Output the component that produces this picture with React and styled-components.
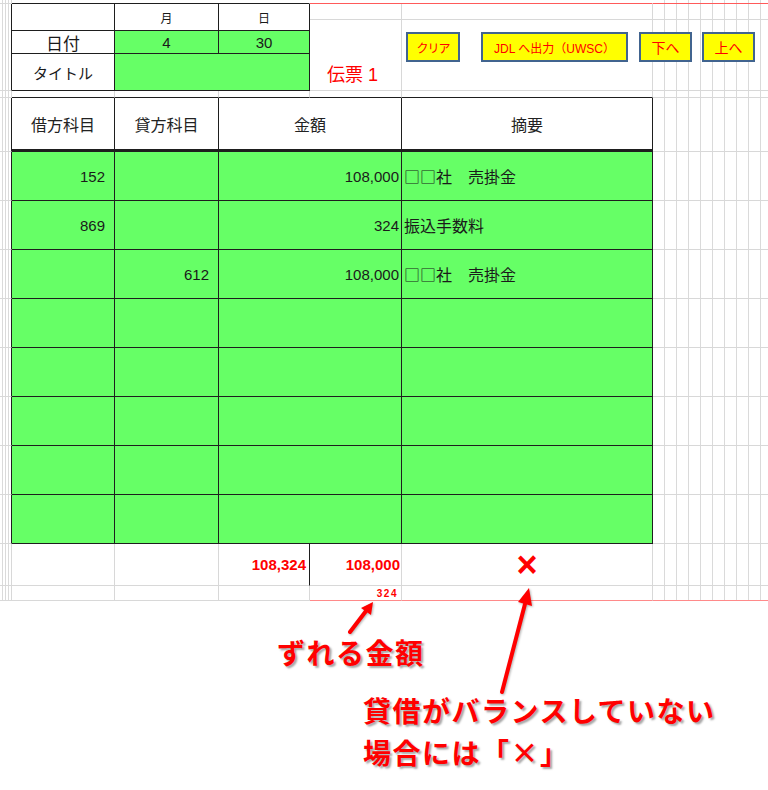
import React from 'react';
import styled, { createGlobalStyle } from 'styled-components';

const COLS = '12px 103px 104px 91px 92px 251px 115px';
const GREEN = '#66ff66';
const LINE = '#1e1e1e';
const GRID = '#d8d8d8';
const RED = '#ff0000';

const GlobalStyle = createGlobalStyle`
  html, body {
    margin: 0;
    padding: 0;
    background: #fff;
  }
  body {
    font-family: "Liberation Sans", "Noto Sans CJK JP", sans-serif;
    color: #1a1a1a;
  }
  * {
    box-sizing: border-box;
  }
`;

const Page = styled.div`
  position: relative;
  width: 768px;
  height: 790px;
  overflow: hidden;
  background: #fff;
`;

const TopGrid = styled.div`
  display: grid;
  grid-template-columns: ${COLS};
  grid-template-rows: 4px 16px 11px 23px 37px 7px;
`;

const SheetRow = styled.div`
  display: grid;
  grid-template-columns: ${COLS};
  height: ${(p) => p.$h}px;
`;

const Cell = styled.div`
  ${(p) => p.$span && `grid-column: span ${p.$span};`}
  display: flex;
  align-items: center;
  justify-content: ${(p) => p.$align || 'center'};
  padding: 0 ${(p) => p.$pad || 0}px;
  background: ${(p) => p.$bg || '#fff'};
  border-right: 1px solid ${(p) => p.$right || GRID};
  border-bottom: ${(p) => p.$bottom || `1px solid ${GRID}`};
  font-size: ${(p) => p.$size || 15}px;
  white-space: nowrap;
  overflow: hidden;
`;

const TopCell = styled(Cell)`
  grid-column: ${(p) => p.$col};
  grid-row: ${(p) => p.$row};
`;

const Gutter = styled.div`
  grid-row: ${(p) => p.$row || 'auto'};
  grid-column: 1;
  background: repeating-linear-gradient(to right, #fff 0 2px, #dadada 2px 3px);
  border-right: 1px solid ${(p) => p.$edge || GRID};
  border-bottom: 1px solid ${GRID};
`;

const Filler = styled.div`
  grid-row: ${(p) => p.$row || 'auto'};
  grid-column: ${(p) => p.$col || 'auto'};
  background: repeating-linear-gradient(to right, #fff 0 11px, #dadada 11px 12px);
  border-bottom: ${(p) => p.$bottom || `1px solid ${GRID}`};
`;

const HeadCell = styled(Cell)`
  font-size: 16px;
  color: #222;
  border-right-color: ${LINE};
  border-bottom: 3px solid ${LINE};
`;

const DataCell = styled(Cell)`
  background: ${GREEN};
  border-right-color: ${LINE};
  border-bottom: 1px solid ${LINE};
  font-size: 15px;
`;

const NoteCell = styled(DataCell)`
  font-family: "Noto Sans CJK JP", sans-serif;
  font-size: 16px;
`;

const TotalCell = styled(Cell)`
  color: ${RED};
  font-weight: bold;
  font-size: ${(p) => p.$size || 15}px;
`;

const CrossCell = styled(TotalCell)`
  overflow: visible;
  font-family: "Liberation Sans", sans-serif;
  font-size: 36px;
  line-height: 1;
`;

const Diff = styled.span`
  font-size: 10px;
  font-weight: bold;
  letter-spacing: 1.5px;
  color: ${RED};
`;

const ButtonLayer = styled.div`
  grid-column: 5 / 8;
  grid-row: 3 / 6;
  z-index: 1;
  display: flex;
  flex-direction: column;
  padding-top: 12px;
`;

const ButtonBar = styled.div`
  display: flex;
  padding-left: 96px;
`;

const SheetButton = styled.button`
  width: ${(p) => p.$w}px;
  height: 30px;
  margin-left: ${(p) => p.$ml || 0}px;
  padding: 0;
  display: flex;
  align-items: center;
  justify-content: center;
  background: #ffff00;
  border: 2px solid #41648f;
  color: ${RED};
  font-family: "Liberation Sans", "Noto Sans CJK JP", sans-serif;
  font-size: ${(p) => p.$size || 12}px;
  letter-spacing: ${(p) => p.$ls || 0}px;
  white-space: nowrap;
`;

const SlipLabel = styled.div`
  margin: 1px 0 0 17px;
  color: ${RED};
  font-size: 18px;
  line-height: 24px;
`;

const Notes = styled.div`
  display: flex;
  flex-direction: column;
  padding-top: 30px;
`;

const Callout = styled.div`
  margin-left: ${(p) => p.$left}px;
  margin-top: ${(p) => p.$top || 0}px;
  color: ${RED};
  font-family: "Noto Sans CJK JP", sans-serif;
  font-weight: 700;
  font-size: 28px;
  line-height: 42px;
  letter-spacing: 1.5px;
  text-shadow: 2px 2px 2px rgba(0, 0, 0, 0.35);
`;

const ArrowLayer = styled.svg`
  position: absolute;
  left: 0;
  top: 0;
  pointer-events: none;
  filter: drop-shadow(1px 1px 1px rgba(0, 0, 0, 0.3));
`;

const entries = [
  { dr: '152', cr: '', amt: '108,000', note: '□□社　売掛金' },
  { dr: '869', cr: '', amt: '324', note: '振込手数料' },
  { dr: '', cr: '612', amt: '108,000', note: '□□社　売掛金' },
  {}, {}, {}, {}, {},
];

const TopSection = () => (
  <TopGrid>
    <Gutter $row="1 / 2" />
    <Gutter $row="2 / 6" $edge={LINE} />
    <Gutter $row="6 / 7" />

    <TopCell $col="2 / 5" $row="1" $right="transparent" $bottom={`1px solid ${LINE}`} />
    <TopCell $col="5 / 7" $row="1" $right="transparent" $bottom="1px solid #ff5a5a" />
    <Filler $col="7" $row="1" $bottom="1px solid #ff5a5a" />

    <TopCell $col="2" $row="2 / 4" $right={LINE} $bottom={`1px solid ${LINE}`} />
    <TopCell $col="3" $row="2 / 4" $right={LINE} $bottom={`1px solid ${LINE}`} $size={12}>月</TopCell>
    <TopCell $col="4" $row="2 / 4" $right={LINE} $bottom={`1px solid ${LINE}`} $size={12}>日</TopCell>

    <TopCell $col="2" $row="4" $right={LINE} $bottom={`1px solid ${LINE}`} $size={17}>日付</TopCell>
    <TopCell $col="3" $row="4" $bg={GREEN} $right={LINE} $bottom={`1px solid ${LINE}`}>4</TopCell>
    <TopCell $col="4" $row="4" $bg={GREEN} $right={LINE} $bottom={`1px solid ${LINE}`}>30</TopCell>

    <TopCell $col="2" $row="5" $right={LINE} $bottom={`1px solid ${LINE}`}>タイトル</TopCell>
    <TopCell $col="3 / 5" $row="5" $bg={GREEN} $right={LINE} $bottom={`1px solid ${LINE}`} />

    <TopCell $col="2" $row="6" $bottom={`1px solid ${LINE}`} />
    <TopCell $col="3" $row="6" $bottom={`1px solid ${LINE}`} />
    <TopCell $col="4" $row="6" $bottom={`1px solid ${LINE}`} />

    <TopCell $col="5" $row="2" />
    <TopCell $col="6" $row="2" />
    <Filler $col="7" $row="2" />
    <TopCell $col="5" $row="3 / 6" />
    <TopCell $col="6" $row="3 / 6" />
    <Filler $col="7" $row="3 / 6" />
    <TopCell $col="5" $row="6" $bottom={`1px solid ${LINE}`} />
    <TopCell $col="6" $row="6" $bottom={`1px solid ${LINE}`} />
    <Filler $col="7" $row="6" />

    <ButtonLayer>
      <ButtonBar>
        <SheetButton $w={54} $ls={-1}>クリア</SheetButton>
        <SheetButton $w={147} $ml={21}>JDL へ出力（UWSC）</SheetButton>
        <SheetButton $w={53} $ml={11} $size={14}>下へ</SheetButton>
        <SheetButton $w={53} $ml={10} $size={14}>上へ</SheetButton>
      </ButtonBar>
      <SlipLabel>伝票 1</SlipLabel>
    </ButtonLayer>
  </TopGrid>
);

const JournalTable = () => (
  <>
    <SheetRow $h={54}>
      <Gutter $edge={LINE} />
      <HeadCell>借方科目</HeadCell>
      <HeadCell>貸方科目</HeadCell>
      <HeadCell $span={2}>金額</HeadCell>
      <HeadCell>摘要</HeadCell>
      <Filler />
    </SheetRow>
    {entries.map((e, i) => (
      <SheetRow $h={49} key={i}>
        <Gutter $edge={LINE} />
        <DataCell $align="flex-end" $pad={9}>{e.dr}</DataCell>
        <DataCell $align="flex-end" $pad={9}>{e.cr}</DataCell>
        <DataCell $span={2} $align="flex-end" $pad={2}>{e.amt}</DataCell>
        <NoteCell $align="flex-start" $pad={2}>{e.note}</NoteCell>
        <Filler />
      </SheetRow>
    ))}
    <SheetRow $h={42}>
      <Gutter />
      <TotalCell />
      <TotalCell />
      <TotalCell $align="flex-end" $pad={3} $right={LINE}>108,324</TotalCell>
      <TotalCell $align="flex-end" $pad={1}>108,000</TotalCell>
      <CrossCell>×</CrossCell>
      <Filler />
    </SheetRow>
    <SheetRow $h={15}>
      <Gutter />
      <TotalCell />
      <TotalCell />
      <TotalCell />
      <TotalCell $align="flex-end" $pad={3} $bottom="1px solid #ff8a8a"><Diff>324</Diff></TotalCell>
      <TotalCell $bottom="1px solid #ff8a8a" />
      <Filler $bottom="1px solid #ff8a8a" />
    </SheetRow>
  </>
);

const Arrows = () => (
  <ArrowLayer width="768" height="790" viewBox="0 0 768 790">
    <line x1="350" y1="632" x2="366" y2="611" stroke={RED} strokeWidth="4" strokeLinecap="round" />
    <polygon points="373,602 371,615 361,608" fill={RED} />
    <line x1="502" y1="692" x2="525" y2="604" stroke={RED} strokeWidth="4" strokeLinecap="round" />
    <polygon points="529,588 532,606 518,602" fill={RED} />
  </ArrowLayer>
);

export default function App() {
  return (
    <>
      <GlobalStyle />
      <Page>
        <TopSection />
        <JournalTable />
        <Notes>
          <Callout $left={277}>ずれる金額</Callout>
          <Callout $left={363} $top={16}>
            貸借がバランスしていない
            <br />
            場合には「×」
          </Callout>
        </Notes>
        <Arrows />
      </Page>
    </>
  );
}
